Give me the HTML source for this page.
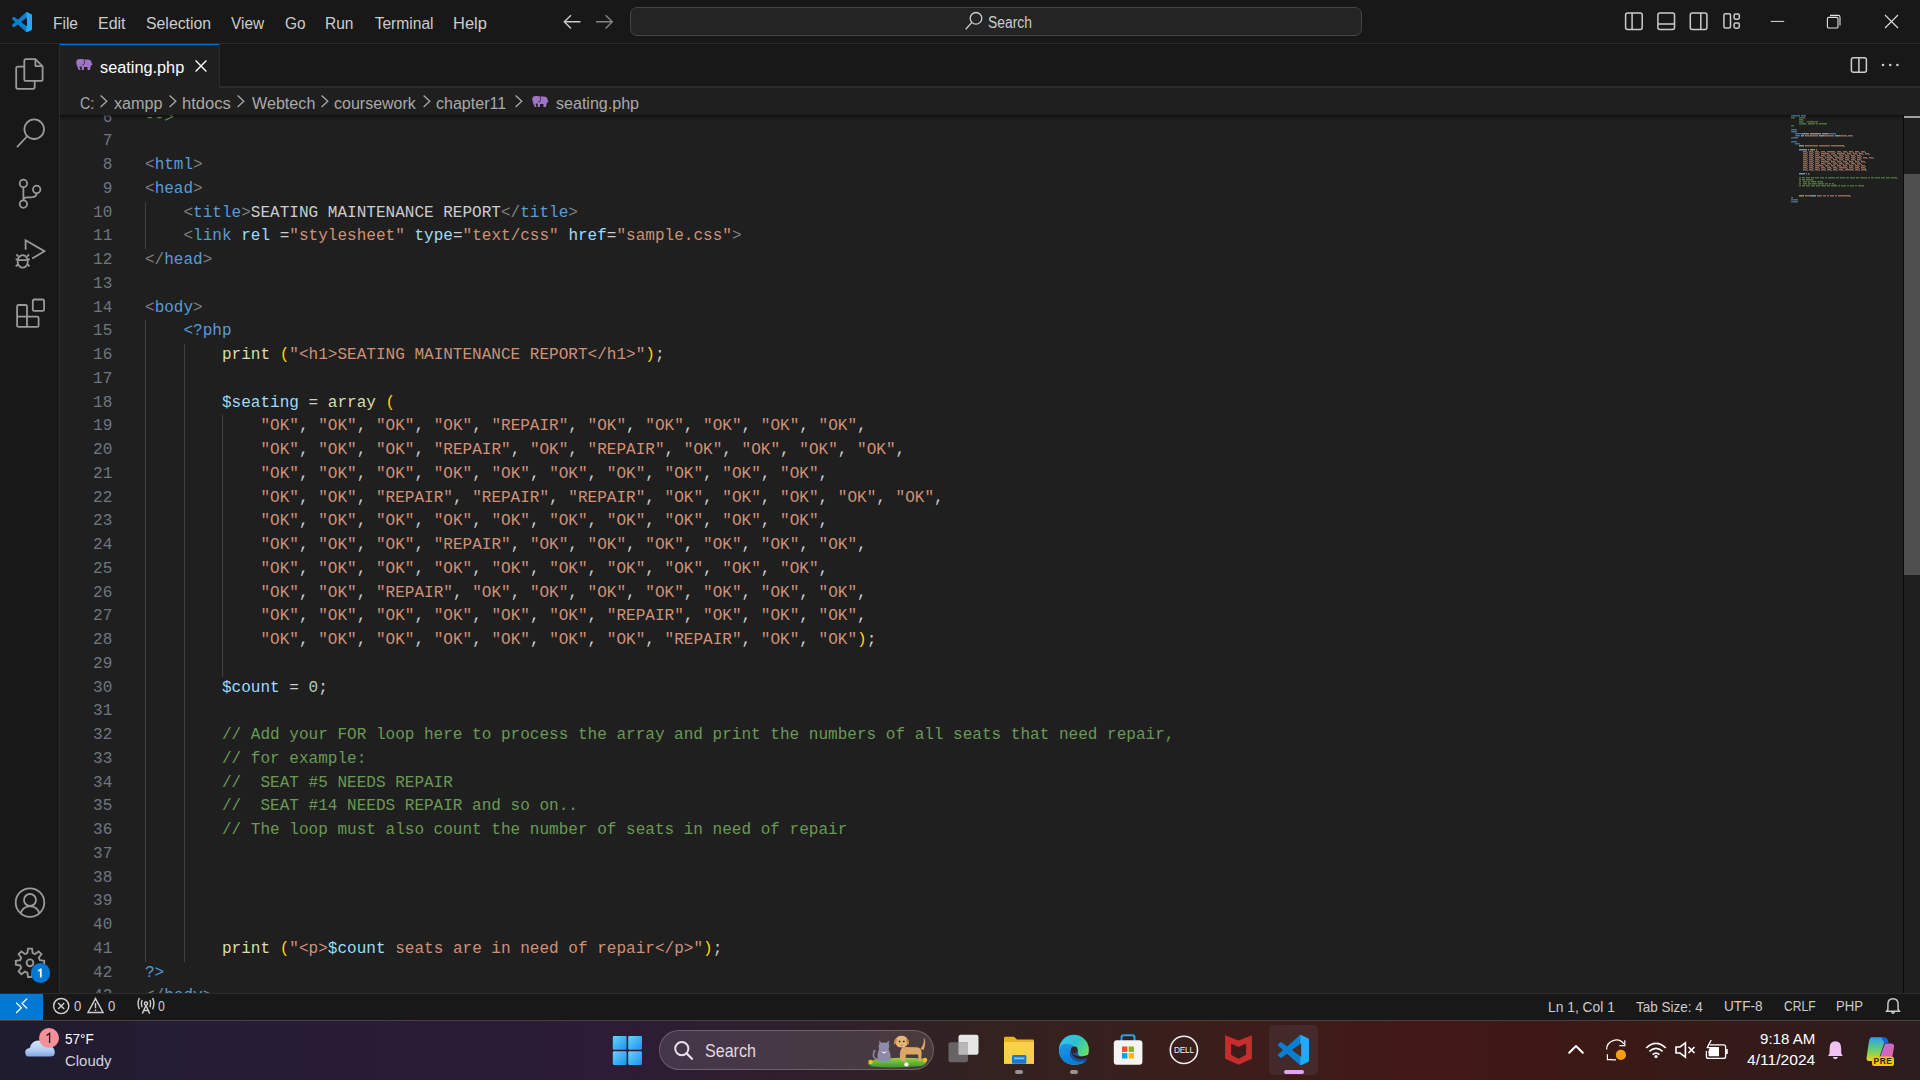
<!DOCTYPE html><html><head><meta charset="utf-8"><style>
*{margin:0;padding:0;box-sizing:border-box}
html,body{width:1920px;height:1080px;overflow:hidden;background:#1f1f1f}
body>div,body>svg{position:absolute}
.ls{font-family:"Liberation Sans",sans-serif;line-height:1;white-space:pre;transform-origin:0 0}
.lm{font-family:"Liberation Mono",monospace;white-space:pre}
.code{position:absolute;left:0;top:0;width:1920px;height:1080px;overflow:hidden}
.ln{position:absolute;font-family:"Liberation Mono",monospace;font-size:16.04px;line-height:23.75px;height:23.75px;white-space:pre}
</style></head><body>
<div style="left:0px;top:0px;width:1920px;height:43px;background:#181818;"></div>
<div style="left:0px;top:43px;width:1920px;height:1px;background:#2b2b2b;"></div>
<svg style="position:absolute;left:11.9px;top:11.9px" width="20" height="20.1" viewBox="0 0 100 100" preserveAspectRatio="none"><defs><clipPath id="vca"><path d="M96.46 10.8L75.86.87a6.23 6.23 0 0 0-7.1 1.2L29.35 38.04 12.19 25.01a4.16 4.16 0 0 0-5.32.24L1.36 30.26a4.17 4.17 0 0 0 0 6.16L16.25 50 1.36 63.58a4.17 4.17 0 0 0 0 6.16l5.51 5.01a4.16 4.16 0 0 0 5.32.24l17.16-13.03 39.41 35.96a6.23 6.23 0 0 0 7.1 1.2l20.6-9.92A6.25 6.25 0 0 0 100 83.6V16.4a6.25 6.25 0 0 0-3.54-5.6zM75.01 72.7L45.1 50l29.91-22.7v45.4z"/></clipPath></defs><path d="M96.46 10.8L75.86.87a6.23 6.23 0 0 0-7.1 1.2L29.35 38.04 12.19 25.01a4.16 4.16 0 0 0-5.32.24L1.36 30.26a4.17 4.17 0 0 0 0 6.16L16.25 50 1.36 63.58a4.17 4.17 0 0 0 0 6.16l5.51 5.01a4.16 4.16 0 0 0 5.32.24l17.16-13.03 39.41 35.96a6.23 6.23 0 0 0 7.1 1.2l20.6-9.92A6.25 6.25 0 0 0 100 83.6V16.4a6.25 6.25 0 0 0-3.54-5.6zM75.01 72.7L45.1 50l29.91-22.7v45.4z" fill="#0a7fd0"/><rect x="72" y="0" width="30" height="100" fill="#25a9f2" clip-path="url(#vca)"/></svg>
<div class="ls" style="left:52.95px;top:16.15px;font-size:15.6px;color:#cccccc;transform:scaleX(0.9939);">File</div>
<div class="ls" style="left:97.83px;top:16.15px;font-size:15.6px;color:#cccccc;transform:scaleX(1.0251);">Edit</div>
<div class="ls" style="left:145.63px;top:16.15px;font-size:15.6px;color:#cccccc;transform:scaleX(1.0153);">Selection</div>
<div class="ls" style="left:231.09px;top:16.15px;font-size:15.6px;color:#cccccc;transform:scaleX(0.9870);">View</div>
<div class="ls" style="left:285.09px;top:16.15px;font-size:15.6px;color:#cccccc;transform:scaleX(0.9856);">Go</div>
<div class="ls" style="left:324.95px;top:16.15px;font-size:15.6px;color:#cccccc;transform:scaleX(0.9946);">Run</div>
<div class="ls" style="left:374.63px;top:16.15px;font-size:15.6px;color:#cccccc;">Terminal</div>
<div class="ls" style="left:453.33px;top:16.15px;font-size:15.6px;color:#cccccc;transform:scaleX(1.0571);">Help</div>
<svg style="position:absolute;left:560px;top:11px;" width="24" height="22" viewBox="0 0 24 22"><path d="M4.5 10.8 H20.5 M11 4.2 L4.3 10.8 L11 17.4" stroke="#cccccc" stroke-width="1.4" fill="none"/></svg>
<svg style="position:absolute;left:594px;top:11px;" width="24" height="22" viewBox="0 0 24 22"><path d="M2 10.8 H18 M11.6 4.2 L18.3 10.8 L11.6 17.4" stroke="#868686" stroke-width="1.4" fill="none"/></svg>
<div style="left:630px;top:7px;width:732px;height:29px;background:#242424;border:1px solid #454545;border-radius:7px"></div>
<svg style="position:absolute;left:963px;top:10px;" width="22" height="22" viewBox="0 0 22 22"><circle cx="13" cy="8.3" r="5.8" stroke="#cccccc" stroke-width="1.3" fill="none"/><path d="M8.9 12.4 L2.8 19.2" stroke="#cccccc" stroke-width="1.4"/></svg>
<div class="ls" style="left:987.71px;top:15.15px;font-size:15.6px;color:#cccccc;transform:scaleX(0.8879);">Search</div>
<svg style="position:absolute;left:1620px;top:8px;" width="28" height="28" viewBox="0 0 28 28"><rect x="5.6" y="4.9" width="16.6" height="16.6" rx="2" stroke="#cccccc" stroke-width="1.5" fill="none"/><path d="M12.1 5 V21.5" stroke="#cccccc" stroke-width="1.5" fill="none"/></svg>
<svg style="position:absolute;left:1652px;top:8px;" width="28" height="28" viewBox="0 0 28 28"><rect x="5.9" y="4.9" width="16.6" height="16.6" rx="2" stroke="#cccccc" stroke-width="1.5" fill="none"/><path d="M6 16 H22.5" stroke="#cccccc" stroke-width="1.5" fill="none"/></svg>
<svg style="position:absolute;left:1684px;top:8px;" width="28" height="28" viewBox="0 0 28 28"><rect x="6.3" y="4.9" width="16.6" height="16.6" rx="2" stroke="#cccccc" stroke-width="1.5" fill="none"/><path d="M16.8 5 V21.5" stroke="#cccccc" stroke-width="1.5" fill="none"/></svg>
<svg style="position:absolute;left:1716px;top:8px;" width="28" height="28" viewBox="0 0 28 28"><rect x="7.9" y="5.7" width="6.6" height="14.4" rx="1.6" stroke="#cccccc" stroke-width="1.5" fill="none"/><rect x="18.1" y="6" width="5.2" height="5.2" rx="1.4" stroke="#cccccc" stroke-width="1.5" fill="none"/><rect x="18.1" y="15" width="5.2" height="5.2" rx="1.4" stroke="#cccccc" stroke-width="1.5" fill="none"/></svg>
<svg style="position:absolute;left:1768px;top:18px;" width="20" height="8" viewBox="0 0 20 8"><path d="M2.8 3.4 H16.2" stroke="#e0e0e0" stroke-width="1"/></svg>
<svg style="position:absolute;left:1824px;top:12px;" width="20" height="20" viewBox="0 0 20 20"><rect x="3.4" y="5.4" width="10.6" height="10.6" rx="1.3" stroke="#e0e0e0" stroke-width="1.1" fill="none"/><path d="M6 3.4 H14.2 Q16 3.4 16 5.2 V13.4" stroke="#e0e0e0" stroke-width="1.1" fill="none"/></svg>
<svg style="position:absolute;left:1882px;top:12px;" width="20" height="20" viewBox="0 0 20 20"><path d="M3 3 L16 16 M16 3 L3 16" stroke="#e0e0e0" stroke-width="1.1"/></svg>
<div style="left:0px;top:44px;width:59px;height:949px;background:#181818;"></div>
<div style="left:59px;top:44px;width:1px;height:949px;background:#2b2b2b;"></div>
<svg style="position:absolute;left:0px;top:0px;" width="60" height="100" viewBox="0 0 60 100"><path d="M26 59.2 H35.4 L42.6 66.4 V79.2 Q42.6 80.9 40.9 80.9 H26 Q24.3 80.9 24.3 79.2 V60.9 Q24.3 59.2 26 59.2 Z" stroke="#9a9a9a" stroke-width="1.8" fill="none"/><path d="M35.4 59.4 V65.6 Q35.4 66.2 36 66.2 H42.4" stroke="#9a9a9a" stroke-width="1.8" fill="none"/><path d="M24.3 66.6 H17.9 Q16.2 66.6 16.2 68.3 V87.1 Q16.2 88.8 17.9 88.8 H33 Q34.7 88.8 34.7 87.1 V80.9" stroke="#9a9a9a" stroke-width="1.8" fill="none"/></svg>
<svg style="position:absolute;left:14px;top:117px;" width="32" height="32" viewBox="0 0 32 32"><circle cx="20.2" cy="12.2" r="9.8" stroke="#9a9a9a" stroke-width="1.8" fill="none"/><path d="M13.4 19 L3 30.2" stroke="#9a9a9a" stroke-width="1.8" fill="none"/></svg>
<svg style="position:absolute;left:14px;top:177px;" width="32" height="32" viewBox="0 0 32 32"><circle cx="9.4" cy="6.4" r="3.7" stroke="#9a9a9a" stroke-width="1.8" fill="none"/><circle cx="9.4" cy="27.1" r="3.7" stroke="#9a9a9a" stroke-width="1.8" fill="none"/><circle cx="22.7" cy="12.4" r="3.7" stroke="#9a9a9a" stroke-width="1.8" fill="none"/><path d="M9.4 10.1 V23.4 M22.7 16.1 Q22.7 20.4 17 20.4 H13 Q9.4 20.4 9.4 23.4" stroke="#9a9a9a" stroke-width="1.8" fill="none"/></svg>
<svg style="position:absolute;left:14px;top:237px;" width="32" height="32" viewBox="0 0 32 32"><path d="M11.6 12.8 V3.2 L30.4 14.2 L18.2 21.6" stroke="#9a9a9a" stroke-width="1.8" fill="none"/><ellipse cx="8.7" cy="24.4" rx="5.1" ry="6.3" stroke="#9a9a9a" stroke-width="1.8" fill="none"/><path d="M3.6 22.4 H1.6 M13.8 22.4 H15.8 M3.8 27.4 L1.8 29.4 M13.6 27.4 L15.6 29.4 M4.4 19.6 L2.4 17.4 M13 19.6 L15 17.4 M3.8 23.2 H13.6" stroke="#9a9a9a" stroke-width="1.8" fill="none"/></svg>
<svg style="position:absolute;left:14px;top:297px;" width="32" height="32" viewBox="0 0 32 32"><path d="M3.1 9.4 Q3.1 8 4.5 8 H11.6 Q13 8 13 9.4 V19.7 H23.2 Q24.6 19.7 24.6 21.1 V28.4 Q24.6 29.8 23.2 29.8 H4.5 Q3.1 29.8 3.1 28.4 Z M3.1 19.7 H13 V29.8" stroke="#9a9a9a" stroke-width="1.8" fill="none"/><rect x="18.8" y="2.5" width="11.3" height="11.3" rx="1.4" stroke="#9a9a9a" stroke-width="1.8" fill="none"/></svg>
<svg style="position:absolute;left:14px;top:886px;" width="32" height="32" viewBox="0 0 32 32"><circle cx="16" cy="16.6" r="14.3" stroke="#9a9a9a" stroke-width="1.8" fill="none"/><circle cx="16" cy="14" r="6" stroke="#9a9a9a" stroke-width="1.8" fill="none"/><path d="M6.8 27 Q9 20.4 16 20.4 Q23 20.4 25.2 27" stroke="#9a9a9a" stroke-width="1.8" fill="none"/></svg>
<svg style="position:absolute;left:14px;top:946px;" width="32" height="32" viewBox="0 0 32 32"><path d="M12.17 7.56 L13.36 6.95 L14.01 2.64 L17.99 2.64 L18.64 6.95 L19.83 7.56 L19.83 7.56 L21.10 7.97 L24.61 5.38 L27.42 8.19 L24.83 11.70 L25.24 12.97 L25.24 12.97 L25.85 14.16 L30.16 14.81 L30.16 18.79 L25.85 19.44 L25.24 20.63 L25.24 20.63 L24.83 21.90 L27.42 25.41 L24.61 28.22 L21.10 25.63 L19.83 26.04 L19.83 26.04 L18.64 26.65 L17.99 30.96 L14.01 30.96 L13.36 26.65 L12.17 26.04 L12.17 26.04 L10.90 25.63 L7.39 28.22 L4.58 25.41 L7.17 21.90 L6.76 20.63 L6.76 20.63 L6.15 19.44 L1.84 18.79 L1.84 14.81 L6.15 14.16 L6.76 12.97 L6.76 12.97 L7.17 11.70 L4.58 8.19 L7.39 5.38 L10.90 7.97 L12.17 7.56 Z" stroke="#969696" stroke-width="1.9" fill="none" stroke-linejoin="miter"/><circle cx="16" cy="16.8" r="3.4" stroke="#969696" stroke-width="1.9" fill="none"/></svg>
<div style="left:30.5px;top:963px;width:19.5px;height:19.5px;border-radius:50%;background:#0078d4"></div>
<svg style="position:absolute;left:30px;top:963px;" width="20" height="20" viewBox="0 0 20 20"><path d="M8.3 7.9 L10.8 6.3 V14.4" stroke="#ffffff" stroke-width="1.8" fill="none" stroke-linejoin="round"/></svg>
<div style="left:60px;top:44px;width:1860px;height:43px;background:#181818;"></div>
<div style="left:60px;top:86px;width:1860px;height:1.5px;background:#2b2b2b;"></div>
<div style="left:60px;top:44px;width:159px;height:44px;background:#1f1f1f;"></div>
<div style="left:60px;top:44px;width:159px;height:1px;background:#0078d4;"></div>
<div style="left:219px;top:44px;width:1px;height:43px;background:#2b2b2b;"></div>
<svg style="position:absolute;left:72px;top:54px;" width="26" height="22" viewBox="0 0 26 22"><path fill="#a074c4" d="M6 5.2 C4.8 5.5 4.2 6.8 4.3 8.6 C4.4 10.8 5.2 12.6 6.2 14.6 L6.8 16 L8.6 16 L7.6 13.6 C7.6 12.8 8.6 12.4 9.6 12.6 L9.8 16.1 L11.9 16.1 L12 13 L15.4 13 L15.6 16.1 L18 16.1 L18.6 12.4 C19.4 11.6 19.8 11 20.8 10.6 C19.8 10.4 19.8 9.4 19.6 8.2 C19.2 6.4 17.8 5.6 16 5.6 L12.6 5.6 C11.6 5 9.5 4.8 8 4.9 Z"/><path d="M12.4 6 V10 Q12.3 10.8 10.2 10.8" stroke="#1f1f1f" stroke-width="0.7" fill="none"/></svg>
<div class="ls" style="left:99.64px;top:59.56px;font-size:16px;color:#ffffff;transform:scaleX(1.0176);">seating.php</div>
<svg style="position:absolute;left:193px;top:58px;" width="16" height="16" viewBox="0 0 16 16"><path d="M2.6 2.6 L13.4 13.4 M13.4 2.6 L2.6 13.4" stroke="#ffffff" stroke-width="1.35"/></svg>
<svg style="position:absolute;left:1848px;top:54px;" width="22" height="22" viewBox="0 0 22 22"><rect x="3.4" y="3.8" width="15" height="14.4" rx="2" stroke="#cccccc" stroke-width="1.5" fill="none"/><path d="M10.9 4 V18" stroke="#cccccc" stroke-width="1.5"/></svg>
<svg style="position:absolute;left:1878px;top:58px;" width="26" height="14" viewBox="0 0 26 14"><circle cx="5" cy="7" r="1.3" fill="#cccccc"/><circle cx="12.2" cy="7" r="1.3" fill="#cccccc"/><circle cx="19.4" cy="7" r="1.3" fill="#cccccc"/></svg>
<div style="left:60px;top:87.5px;width:1860px;height:27.5px;background:#1f1f1f;"></div>
<div class="ls" style="left:79.71px;top:95.69px;font-size:15.6px;color:#a9a9a9;transform:scaleX(0.9154);">C:</div>
<div class="ls" style="left:113.71px;top:95.87px;font-size:15.6px;color:#a9a9a9;transform:scaleX(1.0375);">xampp</div>
<div class="ls" style="left:181.87px;top:95.69px;font-size:15.6px;color:#a9a9a9;transform:scaleX(1.0636);">htdocs</div>
<div class="ls" style="left:251.55px;top:95.69px;font-size:15.6px;color:#a9a9a9;transform:scaleX(1.0342);">Webtech</div>
<div class="ls" style="left:334.17px;top:95.69px;font-size:15.6px;color:#a9a9a9;transform:scaleX(1.0261);">coursework</div>
<div class="ls" style="left:436.17px;top:95.69px;font-size:15.6px;color:#a9a9a9;transform:scaleX(1.0283);">chapter11</div>
<svg style="position:absolute;left:98.3px;top:93px;" width="12" height="16" viewBox="0 0 12 16"><path d="M2.6 2.6 L8.8 8.3 L2.6 14" stroke="#a9a9a9" stroke-width="1.3" fill="none"/></svg>
<svg style="position:absolute;left:167.2px;top:93px;" width="12" height="16" viewBox="0 0 12 16"><path d="M2.6 2.6 L8.8 8.3 L2.6 14" stroke="#a9a9a9" stroke-width="1.3" fill="none"/></svg>
<svg style="position:absolute;left:235.4px;top:93px;" width="12" height="16" viewBox="0 0 12 16"><path d="M2.6 2.6 L8.8 8.3 L2.6 14" stroke="#a9a9a9" stroke-width="1.3" fill="none"/></svg>
<svg style="position:absolute;left:318.5px;top:93px;" width="12" height="16" viewBox="0 0 12 16"><path d="M2.6 2.6 L8.8 8.3 L2.6 14" stroke="#a9a9a9" stroke-width="1.3" fill="none"/></svg>
<svg style="position:absolute;left:421px;top:93px;" width="12" height="16" viewBox="0 0 12 16"><path d="M2.6 2.6 L8.8 8.3 L2.6 14" stroke="#a9a9a9" stroke-width="1.3" fill="none"/></svg>
<svg style="position:absolute;left:513px;top:93px;" width="12" height="16" viewBox="0 0 12 16"><path d="M2.6 2.6 L8.8 8.3 L2.6 14" stroke="#a9a9a9" stroke-width="1.3" fill="none"/></svg>
<svg style="position:absolute;left:527.7px;top:91.4px;" width="26" height="22" viewBox="0 0 26 22"><path fill="#a074c4" d="M6 5.2 C4.8 5.5 4.2 6.8 4.3 8.6 C4.4 10.8 5.2 12.6 6.2 14.6 L6.8 16 L8.6 16 L7.6 13.6 C7.6 12.8 8.6 12.4 9.6 12.6 L9.8 16.1 L11.9 16.1 L12 13 L15.4 13 L15.6 16.1 L18 16.1 L18.6 12.4 C19.4 11.6 19.8 11 20.8 10.6 C19.8 10.4 19.8 9.4 19.6 8.2 C19.2 6.4 17.8 5.6 16 5.6 L12.6 5.6 C11.6 5 9.5 4.8 8 4.9 Z"/><path d="M12.4 6 V10 Q12.3 10.8 10.2 10.8" stroke="#1f1f1f" stroke-width="0.7" fill="none"/></svg>
<div class="ls" style="left:556.05px;top:95.69px;font-size:15.6px;color:#a9a9a9;transform:scaleX(1.0300);">seating.php</div>
<div style="left:60px;top:115px;width:1860px;height:878px;background:#1f1f1f;"></div>
<div class="code" style="left:60px;top:115px;width:1730px;height:878px;">
<div class="ln" style="left:42.675px;top:-8.300px;color:#6e7681">6</div>
<div class="ln" style="left:85.0px;top:-8.300px"><span style="color:#6A9955">--&gt;</span></div>
<div class="ln" style="left:42.675px;top:15.450px;color:#6e7681">7</div>
<div class="ln" style="left:42.675px;top:39.200px;color:#6e7681">8</div>
<div class="ln" style="left:85.0px;top:39.200px"><span style="color:#808080">&lt;</span><span style="color:#569CD6">html</span><span style="color:#808080">&gt;</span></div>
<div class="ln" style="left:42.675px;top:62.950px;color:#6e7681">9</div>
<div class="ln" style="left:85.0px;top:62.950px"><span style="color:#808080">&lt;</span><span style="color:#569CD6">head</span><span style="color:#808080">&gt;</span></div>
<div class="ln" style="left:33.050px;top:86.700px;color:#6e7681">10</div>
<div class="ln" style="left:85.0px;top:86.700px"><span style="color:#CCCCCC">    </span><span style="color:#808080">&lt;</span><span style="color:#569CD6">title</span><span style="color:#808080">&gt;</span><span style="color:#CCCCCC">SEATING MAINTENANCE REPORT</span><span style="color:#808080">&lt;/</span><span style="color:#569CD6">title</span><span style="color:#808080">&gt;</span></div>
<div class="ln" style="left:33.050px;top:110.450px;color:#6e7681">11</div>
<div class="ln" style="left:85.0px;top:110.450px"><span style="color:#CCCCCC">    </span><span style="color:#808080">&lt;</span><span style="color:#569CD6">link</span><span style="color:#CCCCCC"> </span><span style="color:#9CDCFE">rel</span><span style="color:#CCCCCC"> =</span><span style="color:#CE9178">&quot;stylesheet&quot;</span><span style="color:#CCCCCC"> </span><span style="color:#9CDCFE">type</span><span style="color:#CCCCCC">=</span><span style="color:#CE9178">&quot;text/css&quot;</span><span style="color:#CCCCCC"> </span><span style="color:#9CDCFE">href</span><span style="color:#CCCCCC">=</span><span style="color:#CE9178">&quot;sample.css&quot;</span><span style="color:#808080">&gt;</span></div>
<div class="ln" style="left:33.050px;top:134.200px;color:#6e7681">12</div>
<div class="ln" style="left:85.0px;top:134.200px"><span style="color:#808080">&lt;/</span><span style="color:#569CD6">head</span><span style="color:#808080">&gt;</span></div>
<div class="ln" style="left:33.050px;top:157.950px;color:#6e7681">13</div>
<div class="ln" style="left:33.050px;top:181.700px;color:#6e7681">14</div>
<div class="ln" style="left:85.0px;top:181.700px"><span style="color:#808080">&lt;</span><span style="color:#569CD6">body</span><span style="color:#808080">&gt;</span></div>
<div class="ln" style="left:33.050px;top:205.450px;color:#6e7681">15</div>
<div class="ln" style="left:85.0px;top:205.450px"><span style="color:#CCCCCC">    </span><span style="color:#569CD6">&lt;?php</span></div>
<div class="ln" style="left:33.050px;top:229.200px;color:#6e7681">16</div>
<div class="ln" style="left:85.0px;top:229.200px"><span style="color:#CCCCCC">        </span><span style="color:#DCDCAA">print</span><span style="color:#CCCCCC"> </span><span style="color:#FFD700">(</span><span style="color:#CE9178">&quot;&lt;h1&gt;SEATING MAINTENANCE REPORT&lt;/h1&gt;&quot;</span><span style="color:#FFD700">)</span><span style="color:#CCCCCC">;</span></div>
<div class="ln" style="left:33.050px;top:252.950px;color:#6e7681">17</div>
<div class="ln" style="left:33.050px;top:276.700px;color:#6e7681">18</div>
<div class="ln" style="left:85.0px;top:276.700px"><span style="color:#CCCCCC">        </span><span style="color:#9CDCFE">$seating</span><span style="color:#CCCCCC"> = </span><span style="color:#DCDCAA">array</span><span style="color:#CCCCCC"> </span><span style="color:#FFD700">(</span></div>
<div class="ln" style="left:33.050px;top:300.450px;color:#6e7681">19</div>
<div class="ln" style="left:85.0px;top:300.450px"><span style="color:#CCCCCC">            </span><span style="color:#CE9178">&quot;OK&quot;</span><span style="color:#CCCCCC">, </span><span style="color:#CE9178">&quot;OK&quot;</span><span style="color:#CCCCCC">, </span><span style="color:#CE9178">&quot;OK&quot;</span><span style="color:#CCCCCC">, </span><span style="color:#CE9178">&quot;OK&quot;</span><span style="color:#CCCCCC">, </span><span style="color:#CE9178">&quot;REPAIR&quot;</span><span style="color:#CCCCCC">, </span><span style="color:#CE9178">&quot;OK&quot;</span><span style="color:#CCCCCC">, </span><span style="color:#CE9178">&quot;OK&quot;</span><span style="color:#CCCCCC">, </span><span style="color:#CE9178">&quot;OK&quot;</span><span style="color:#CCCCCC">, </span><span style="color:#CE9178">&quot;OK&quot;</span><span style="color:#CCCCCC">, </span><span style="color:#CE9178">&quot;OK&quot;</span><span style="color:#CCCCCC">,</span></div>
<div class="ln" style="left:33.050px;top:324.200px;color:#6e7681">20</div>
<div class="ln" style="left:85.0px;top:324.200px"><span style="color:#CCCCCC">            </span><span style="color:#CE9178">&quot;OK&quot;</span><span style="color:#CCCCCC">, </span><span style="color:#CE9178">&quot;OK&quot;</span><span style="color:#CCCCCC">, </span><span style="color:#CE9178">&quot;OK&quot;</span><span style="color:#CCCCCC">, </span><span style="color:#CE9178">&quot;REPAIR&quot;</span><span style="color:#CCCCCC">, </span><span style="color:#CE9178">&quot;OK&quot;</span><span style="color:#CCCCCC">, </span><span style="color:#CE9178">&quot;REPAIR&quot;</span><span style="color:#CCCCCC">, </span><span style="color:#CE9178">&quot;OK&quot;</span><span style="color:#CCCCCC">, </span><span style="color:#CE9178">&quot;OK&quot;</span><span style="color:#CCCCCC">, </span><span style="color:#CE9178">&quot;OK&quot;</span><span style="color:#CCCCCC">, </span><span style="color:#CE9178">&quot;OK&quot;</span><span style="color:#CCCCCC">,</span></div>
<div class="ln" style="left:33.050px;top:347.950px;color:#6e7681">21</div>
<div class="ln" style="left:85.0px;top:347.950px"><span style="color:#CCCCCC">            </span><span style="color:#CE9178">&quot;OK&quot;</span><span style="color:#CCCCCC">, </span><span style="color:#CE9178">&quot;OK&quot;</span><span style="color:#CCCCCC">, </span><span style="color:#CE9178">&quot;OK&quot;</span><span style="color:#CCCCCC">, </span><span style="color:#CE9178">&quot;OK&quot;</span><span style="color:#CCCCCC">, </span><span style="color:#CE9178">&quot;OK&quot;</span><span style="color:#CCCCCC">, </span><span style="color:#CE9178">&quot;OK&quot;</span><span style="color:#CCCCCC">, </span><span style="color:#CE9178">&quot;OK&quot;</span><span style="color:#CCCCCC">, </span><span style="color:#CE9178">&quot;OK&quot;</span><span style="color:#CCCCCC">, </span><span style="color:#CE9178">&quot;OK&quot;</span><span style="color:#CCCCCC">, </span><span style="color:#CE9178">&quot;OK&quot;</span><span style="color:#CCCCCC">,</span></div>
<div class="ln" style="left:33.050px;top:371.700px;color:#6e7681">22</div>
<div class="ln" style="left:85.0px;top:371.700px"><span style="color:#CCCCCC">            </span><span style="color:#CE9178">&quot;OK&quot;</span><span style="color:#CCCCCC">, </span><span style="color:#CE9178">&quot;OK&quot;</span><span style="color:#CCCCCC">, </span><span style="color:#CE9178">&quot;REPAIR&quot;</span><span style="color:#CCCCCC">, </span><span style="color:#CE9178">&quot;REPAIR&quot;</span><span style="color:#CCCCCC">, </span><span style="color:#CE9178">&quot;REPAIR&quot;</span><span style="color:#CCCCCC">, </span><span style="color:#CE9178">&quot;OK&quot;</span><span style="color:#CCCCCC">, </span><span style="color:#CE9178">&quot;OK&quot;</span><span style="color:#CCCCCC">, </span><span style="color:#CE9178">&quot;OK&quot;</span><span style="color:#CCCCCC">, </span><span style="color:#CE9178">&quot;OK&quot;</span><span style="color:#CCCCCC">, </span><span style="color:#CE9178">&quot;OK&quot;</span><span style="color:#CCCCCC">,</span></div>
<div class="ln" style="left:33.050px;top:395.450px;color:#6e7681">23</div>
<div class="ln" style="left:85.0px;top:395.450px"><span style="color:#CCCCCC">            </span><span style="color:#CE9178">&quot;OK&quot;</span><span style="color:#CCCCCC">, </span><span style="color:#CE9178">&quot;OK&quot;</span><span style="color:#CCCCCC">, </span><span style="color:#CE9178">&quot;OK&quot;</span><span style="color:#CCCCCC">, </span><span style="color:#CE9178">&quot;OK&quot;</span><span style="color:#CCCCCC">, </span><span style="color:#CE9178">&quot;OK&quot;</span><span style="color:#CCCCCC">, </span><span style="color:#CE9178">&quot;OK&quot;</span><span style="color:#CCCCCC">, </span><span style="color:#CE9178">&quot;OK&quot;</span><span style="color:#CCCCCC">, </span><span style="color:#CE9178">&quot;OK&quot;</span><span style="color:#CCCCCC">, </span><span style="color:#CE9178">&quot;OK&quot;</span><span style="color:#CCCCCC">, </span><span style="color:#CE9178">&quot;OK&quot;</span><span style="color:#CCCCCC">,</span></div>
<div class="ln" style="left:33.050px;top:419.200px;color:#6e7681">24</div>
<div class="ln" style="left:85.0px;top:419.200px"><span style="color:#CCCCCC">            </span><span style="color:#CE9178">&quot;OK&quot;</span><span style="color:#CCCCCC">, </span><span style="color:#CE9178">&quot;OK&quot;</span><span style="color:#CCCCCC">, </span><span style="color:#CE9178">&quot;OK&quot;</span><span style="color:#CCCCCC">, </span><span style="color:#CE9178">&quot;REPAIR&quot;</span><span style="color:#CCCCCC">, </span><span style="color:#CE9178">&quot;OK&quot;</span><span style="color:#CCCCCC">, </span><span style="color:#CE9178">&quot;OK&quot;</span><span style="color:#CCCCCC">, </span><span style="color:#CE9178">&quot;OK&quot;</span><span style="color:#CCCCCC">, </span><span style="color:#CE9178">&quot;OK&quot;</span><span style="color:#CCCCCC">, </span><span style="color:#CE9178">&quot;OK&quot;</span><span style="color:#CCCCCC">, </span><span style="color:#CE9178">&quot;OK&quot;</span><span style="color:#CCCCCC">,</span></div>
<div class="ln" style="left:33.050px;top:442.950px;color:#6e7681">25</div>
<div class="ln" style="left:85.0px;top:442.950px"><span style="color:#CCCCCC">            </span><span style="color:#CE9178">&quot;OK&quot;</span><span style="color:#CCCCCC">, </span><span style="color:#CE9178">&quot;OK&quot;</span><span style="color:#CCCCCC">, </span><span style="color:#CE9178">&quot;OK&quot;</span><span style="color:#CCCCCC">, </span><span style="color:#CE9178">&quot;OK&quot;</span><span style="color:#CCCCCC">, </span><span style="color:#CE9178">&quot;OK&quot;</span><span style="color:#CCCCCC">, </span><span style="color:#CE9178">&quot;OK&quot;</span><span style="color:#CCCCCC">, </span><span style="color:#CE9178">&quot;OK&quot;</span><span style="color:#CCCCCC">, </span><span style="color:#CE9178">&quot;OK&quot;</span><span style="color:#CCCCCC">, </span><span style="color:#CE9178">&quot;OK&quot;</span><span style="color:#CCCCCC">, </span><span style="color:#CE9178">&quot;OK&quot;</span><span style="color:#CCCCCC">,</span></div>
<div class="ln" style="left:33.050px;top:466.700px;color:#6e7681">26</div>
<div class="ln" style="left:85.0px;top:466.700px"><span style="color:#CCCCCC">            </span><span style="color:#CE9178">&quot;OK&quot;</span><span style="color:#CCCCCC">, </span><span style="color:#CE9178">&quot;OK&quot;</span><span style="color:#CCCCCC">, </span><span style="color:#CE9178">&quot;REPAIR&quot;</span><span style="color:#CCCCCC">, </span><span style="color:#CE9178">&quot;OK&quot;</span><span style="color:#CCCCCC">, </span><span style="color:#CE9178">&quot;OK&quot;</span><span style="color:#CCCCCC">, </span><span style="color:#CE9178">&quot;OK&quot;</span><span style="color:#CCCCCC">, </span><span style="color:#CE9178">&quot;OK&quot;</span><span style="color:#CCCCCC">, </span><span style="color:#CE9178">&quot;OK&quot;</span><span style="color:#CCCCCC">, </span><span style="color:#CE9178">&quot;OK&quot;</span><span style="color:#CCCCCC">, </span><span style="color:#CE9178">&quot;OK&quot;</span><span style="color:#CCCCCC">,</span></div>
<div class="ln" style="left:33.050px;top:490.450px;color:#6e7681">27</div>
<div class="ln" style="left:85.0px;top:490.450px"><span style="color:#CCCCCC">            </span><span style="color:#CE9178">&quot;OK&quot;</span><span style="color:#CCCCCC">, </span><span style="color:#CE9178">&quot;OK&quot;</span><span style="color:#CCCCCC">, </span><span style="color:#CE9178">&quot;OK&quot;</span><span style="color:#CCCCCC">, </span><span style="color:#CE9178">&quot;OK&quot;</span><span style="color:#CCCCCC">, </span><span style="color:#CE9178">&quot;OK&quot;</span><span style="color:#CCCCCC">, </span><span style="color:#CE9178">&quot;OK&quot;</span><span style="color:#CCCCCC">, </span><span style="color:#CE9178">&quot;REPAIR&quot;</span><span style="color:#CCCCCC">, </span><span style="color:#CE9178">&quot;OK&quot;</span><span style="color:#CCCCCC">, </span><span style="color:#CE9178">&quot;OK&quot;</span><span style="color:#CCCCCC">, </span><span style="color:#CE9178">&quot;OK&quot;</span><span style="color:#CCCCCC">,</span></div>
<div class="ln" style="left:33.050px;top:514.200px;color:#6e7681">28</div>
<div class="ln" style="left:85.0px;top:514.200px"><span style="color:#CCCCCC">            </span><span style="color:#CE9178">&quot;OK&quot;</span><span style="color:#CCCCCC">, </span><span style="color:#CE9178">&quot;OK&quot;</span><span style="color:#CCCCCC">, </span><span style="color:#CE9178">&quot;OK&quot;</span><span style="color:#CCCCCC">, </span><span style="color:#CE9178">&quot;OK&quot;</span><span style="color:#CCCCCC">, </span><span style="color:#CE9178">&quot;OK&quot;</span><span style="color:#CCCCCC">, </span><span style="color:#CE9178">&quot;OK&quot;</span><span style="color:#CCCCCC">, </span><span style="color:#CE9178">&quot;OK&quot;</span><span style="color:#CCCCCC">, </span><span style="color:#CE9178">&quot;REPAIR&quot;</span><span style="color:#CCCCCC">, </span><span style="color:#CE9178">&quot;OK&quot;</span><span style="color:#CCCCCC">, </span><span style="color:#CE9178">&quot;OK&quot;</span><span style="color:#FFD700">)</span><span style="color:#CCCCCC">;</span></div>
<div class="ln" style="left:33.050px;top:537.950px;color:#6e7681">29</div>
<div class="ln" style="left:33.050px;top:561.700px;color:#6e7681">30</div>
<div class="ln" style="left:85.0px;top:561.700px"><span style="color:#CCCCCC">        </span><span style="color:#9CDCFE">$count</span><span style="color:#CCCCCC"> = </span><span style="color:#B5CEA8">0</span><span style="color:#CCCCCC">;</span></div>
<div class="ln" style="left:33.050px;top:585.450px;color:#6e7681">31</div>
<div class="ln" style="left:33.050px;top:609.200px;color:#6e7681">32</div>
<div class="ln" style="left:85.0px;top:609.200px"><span style="color:#CCCCCC">        </span><span style="color:#6A9955">// Add your FOR loop here to process the array and print the numbers of all seats that need repair,</span></div>
<div class="ln" style="left:33.050px;top:632.950px;color:#6e7681">33</div>
<div class="ln" style="left:85.0px;top:632.950px"><span style="color:#CCCCCC">        </span><span style="color:#6A9955">// for example:</span></div>
<div class="ln" style="left:33.050px;top:656.700px;color:#6e7681">34</div>
<div class="ln" style="left:85.0px;top:656.700px"><span style="color:#CCCCCC">        </span><span style="color:#6A9955">//  SEAT #5 NEEDS REPAIR</span></div>
<div class="ln" style="left:33.050px;top:680.450px;color:#6e7681">35</div>
<div class="ln" style="left:85.0px;top:680.450px"><span style="color:#CCCCCC">        </span><span style="color:#6A9955">//  SEAT #14 NEEDS REPAIR and so on..</span></div>
<div class="ln" style="left:33.050px;top:704.200px;color:#6e7681">36</div>
<div class="ln" style="left:85.0px;top:704.200px"><span style="color:#CCCCCC">        </span><span style="color:#6A9955">// The loop must also count the number of seats in need of repair</span></div>
<div class="ln" style="left:33.050px;top:727.950px;color:#6e7681">37</div>
<div class="ln" style="left:33.050px;top:751.700px;color:#6e7681">38</div>
<div class="ln" style="left:33.050px;top:775.450px;color:#6e7681">39</div>
<div class="ln" style="left:33.050px;top:799.200px;color:#6e7681">40</div>
<div class="ln" style="left:33.050px;top:822.950px;color:#6e7681">41</div>
<div class="ln" style="left:85.0px;top:822.950px"><span style="color:#CCCCCC">        </span><span style="color:#DCDCAA">print</span><span style="color:#CCCCCC"> </span><span style="color:#FFD700">(</span><span style="color:#CE9178">&quot;&lt;p&gt;</span><span style="color:#9CDCFE">$count</span><span style="color:#CE9178"> seats are in need of repair&lt;/p&gt;&quot;</span><span style="color:#FFD700">)</span><span style="color:#CCCCCC">;</span></div>
<div class="ln" style="left:33.050px;top:846.700px;color:#6e7681">42</div>
<div class="ln" style="left:85.0px;top:846.700px"><span style="color:#569CD6">?&gt;</span></div>
<div class="ln" style="left:33.050px;top:870.450px;color:#6e7681">43</div>
<div class="ln" style="left:85.0px;top:870.450px"><span style="color:#808080">&lt;/</span><span style="color:#569CD6">body</span><span style="color:#808080">&gt;</span></div>
<div style="position:absolute;left:85.00px;top:86.70px;width:1px;height:47.50px;background:#404040"></div>
<div style="position:absolute;left:85.00px;top:205.45px;width:1px;height:641.25px;background:#404040"></div>
<div style="position:absolute;left:123.50px;top:229.20px;width:1px;height:617.50px;background:#404040"></div>
<div style="position:absolute;left:162.00px;top:300.45px;width:1px;height:261.25px;background:#404040"></div>
</div>
<div style="left:60px;top:115px;width:1843px;height:6px;background:linear-gradient(#00000090,#00000030 40%,#00000000)"></div>
<svg style="position:absolute;left:1785px;top:110px;" width="120" height="100" viewBox="0 0 120 100"><rect x="6" y="5.0" width="2" height="1.5" fill="#808080" opacity="0.62"/><rect x="8" y="5.0" width="7" height="1.5" fill="#569CD6" opacity="0.62"/><rect x="16" y="5.0" width="4" height="1.5" fill="#569CD6" opacity="0.62"/><rect x="20" y="5.0" width="1" height="1.5" fill="#808080" opacity="0.62"/><rect x="6" y="7.0" width="4" height="1.5" fill="#6A9955" opacity="0.62"/><rect x="14" y="7.0" width="6" height="1.5" fill="#6A9955" opacity="0.62"/><rect x="20" y="8.1" width="1" height="0.9" fill="#6A9955" opacity="0.45"/><rect x="14" y="9.0" width="4" height="1.5" fill="#6A9955" opacity="0.62"/><rect x="18" y="10.1" width="1" height="0.9" fill="#6A9955" opacity="0.45"/><rect x="14" y="11.0" width="4" height="1.5" fill="#6A9955" opacity="0.62"/><rect x="18" y="12.1" width="1" height="0.9" fill="#6A9955" opacity="0.45"/><rect x="22" y="11.0" width="7" height="1.5" fill="#6A9955" opacity="0.62"/><rect x="29" y="12.1" width="1" height="0.9" fill="#6A9955" opacity="0.45"/><rect x="30" y="11.0" width="3" height="1.5" fill="#6A9955" opacity="0.62"/><rect x="14" y="13.0" width="7" height="1.5" fill="#6A9955" opacity="0.62"/><rect x="21" y="14.1" width="1" height="0.9" fill="#6A9955" opacity="0.45"/><rect x="23" y="13.0" width="7" height="1.5" fill="#6A9955" opacity="0.62"/><rect x="31" y="13.0" width="2" height="1.5" fill="#6A9955" opacity="0.62"/><rect x="34" y="13.0" width="8" height="1.5" fill="#6A9955" opacity="0.62"/><rect x="6" y="15.0" width="3" height="1.5" fill="#6A9955" opacity="0.62"/><rect x="6" y="19.0" width="1" height="1.5" fill="#808080" opacity="0.62"/><rect x="7" y="19.0" width="4" height="1.5" fill="#569CD6" opacity="0.62"/><rect x="11" y="19.0" width="1" height="1.5" fill="#808080" opacity="0.62"/><rect x="6" y="21.0" width="1" height="1.5" fill="#808080" opacity="0.62"/><rect x="7" y="21.0" width="4" height="1.5" fill="#569CD6" opacity="0.62"/><rect x="11" y="21.0" width="1" height="1.5" fill="#808080" opacity="0.62"/><rect x="10" y="23.0" width="1" height="1.5" fill="#808080" opacity="0.62"/><rect x="11" y="23.0" width="5" height="1.5" fill="#569CD6" opacity="0.62"/><rect x="16" y="23.0" width="1" height="1.5" fill="#808080" opacity="0.62"/><rect x="17" y="23.0" width="7" height="1.5" fill="#CCCCCC" opacity="0.62"/><rect x="25" y="23.0" width="11" height="1.5" fill="#CCCCCC" opacity="0.62"/><rect x="37" y="23.0" width="6" height="1.5" fill="#CCCCCC" opacity="0.62"/><rect x="43" y="23.0" width="2" height="1.5" fill="#808080" opacity="0.62"/><rect x="45" y="23.0" width="5" height="1.5" fill="#569CD6" opacity="0.62"/><rect x="50" y="23.0" width="1" height="1.5" fill="#808080" opacity="0.62"/><rect x="10" y="25.0" width="1" height="1.5" fill="#808080" opacity="0.62"/><rect x="11" y="25.0" width="4" height="1.5" fill="#569CD6" opacity="0.62"/><rect x="16" y="25.0" width="3" height="1.5" fill="#9CDCFE" opacity="0.62"/><rect x="20" y="25.0" width="1" height="1.5" fill="#CCCCCC" opacity="0.62"/><rect x="21" y="25.0" width="12" height="1.5" fill="#CE9178" opacity="0.62"/><rect x="34" y="25.0" width="4" height="1.5" fill="#9CDCFE" opacity="0.62"/><rect x="38" y="25.0" width="1" height="1.5" fill="#CCCCCC" opacity="0.62"/><rect x="39" y="25.0" width="10" height="1.5" fill="#CE9178" opacity="0.62"/><rect x="50" y="25.0" width="4" height="1.5" fill="#9CDCFE" opacity="0.62"/><rect x="54" y="25.0" width="1" height="1.5" fill="#CCCCCC" opacity="0.62"/><rect x="55" y="25.0" width="7" height="1.5" fill="#CE9178" opacity="0.62"/><rect x="62" y="26.1" width="1" height="0.9" fill="#CE9178" opacity="0.45"/><rect x="63" y="25.0" width="4" height="1.5" fill="#CE9178" opacity="0.62"/><rect x="67" y="25.0" width="1" height="1.5" fill="#808080" opacity="0.62"/><rect x="6" y="27.0" width="2" height="1.5" fill="#808080" opacity="0.62"/><rect x="8" y="27.0" width="4" height="1.5" fill="#569CD6" opacity="0.62"/><rect x="12" y="27.0" width="1" height="1.5" fill="#808080" opacity="0.62"/><rect x="6" y="31.0" width="1" height="1.5" fill="#808080" opacity="0.62"/><rect x="7" y="31.0" width="4" height="1.5" fill="#569CD6" opacity="0.62"/><rect x="11" y="31.0" width="1" height="1.5" fill="#808080" opacity="0.62"/><rect x="10" y="33.0" width="5" height="1.5" fill="#569CD6" opacity="0.62"/><rect x="14" y="35.0" width="5" height="1.5" fill="#DCDCAA" opacity="0.62"/><rect x="20" y="35.0" width="1" height="1.5" fill="#FFD700" opacity="0.62"/><rect x="21" y="35.0" width="12" height="1.5" fill="#CE9178" opacity="0.62"/><rect x="34" y="35.0" width="11" height="1.5" fill="#CE9178" opacity="0.62"/><rect x="46" y="35.0" width="12" height="1.5" fill="#CE9178" opacity="0.62"/><rect x="58" y="35.0" width="1" height="1.5" fill="#FFD700" opacity="0.62"/><rect x="59" y="36.1" width="1" height="0.9" fill="#CCCCCC" opacity="0.45"/><rect x="14" y="39.0" width="8" height="1.5" fill="#9CDCFE" opacity="0.62"/><rect x="23" y="39.0" width="1" height="1.5" fill="#CCCCCC" opacity="0.62"/><rect x="25" y="39.0" width="5" height="1.5" fill="#DCDCAA" opacity="0.62"/><rect x="31" y="39.0" width="1" height="1.5" fill="#FFD700" opacity="0.62"/><rect x="18" y="41.0" width="4" height="1.5" fill="#CE9178" opacity="0.62"/><rect x="22" y="42.1" width="1" height="0.9" fill="#CCCCCC" opacity="0.45"/><rect x="24" y="41.0" width="4" height="1.5" fill="#CE9178" opacity="0.62"/><rect x="28" y="42.1" width="1" height="0.9" fill="#CCCCCC" opacity="0.45"/><rect x="30" y="41.0" width="4" height="1.5" fill="#CE9178" opacity="0.62"/><rect x="34" y="42.1" width="1" height="0.9" fill="#CCCCCC" opacity="0.45"/><rect x="36" y="41.0" width="4" height="1.5" fill="#CE9178" opacity="0.62"/><rect x="40" y="42.1" width="1" height="0.9" fill="#CCCCCC" opacity="0.45"/><rect x="42" y="41.0" width="8" height="1.5" fill="#CE9178" opacity="0.62"/><rect x="50" y="42.1" width="1" height="0.9" fill="#CCCCCC" opacity="0.45"/><rect x="52" y="41.0" width="4" height="1.5" fill="#CE9178" opacity="0.62"/><rect x="56" y="42.1" width="1" height="0.9" fill="#CCCCCC" opacity="0.45"/><rect x="58" y="41.0" width="4" height="1.5" fill="#CE9178" opacity="0.62"/><rect x="62" y="42.1" width="1" height="0.9" fill="#CCCCCC" opacity="0.45"/><rect x="64" y="41.0" width="4" height="1.5" fill="#CE9178" opacity="0.62"/><rect x="68" y="42.1" width="1" height="0.9" fill="#CCCCCC" opacity="0.45"/><rect x="70" y="41.0" width="4" height="1.5" fill="#CE9178" opacity="0.62"/><rect x="74" y="42.1" width="1" height="0.9" fill="#CCCCCC" opacity="0.45"/><rect x="76" y="41.0" width="4" height="1.5" fill="#CE9178" opacity="0.62"/><rect x="80" y="42.1" width="1" height="0.9" fill="#CCCCCC" opacity="0.45"/><rect x="18" y="43.0" width="4" height="1.5" fill="#CE9178" opacity="0.62"/><rect x="22" y="44.1" width="1" height="0.9" fill="#CCCCCC" opacity="0.45"/><rect x="24" y="43.0" width="4" height="1.5" fill="#CE9178" opacity="0.62"/><rect x="28" y="44.1" width="1" height="0.9" fill="#CCCCCC" opacity="0.45"/><rect x="30" y="43.0" width="4" height="1.5" fill="#CE9178" opacity="0.62"/><rect x="34" y="44.1" width="1" height="0.9" fill="#CCCCCC" opacity="0.45"/><rect x="36" y="43.0" width="8" height="1.5" fill="#CE9178" opacity="0.62"/><rect x="44" y="44.1" width="1" height="0.9" fill="#CCCCCC" opacity="0.45"/><rect x="46" y="43.0" width="4" height="1.5" fill="#CE9178" opacity="0.62"/><rect x="50" y="44.1" width="1" height="0.9" fill="#CCCCCC" opacity="0.45"/><rect x="52" y="43.0" width="8" height="1.5" fill="#CE9178" opacity="0.62"/><rect x="60" y="44.1" width="1" height="0.9" fill="#CCCCCC" opacity="0.45"/><rect x="62" y="43.0" width="4" height="1.5" fill="#CE9178" opacity="0.62"/><rect x="66" y="44.1" width="1" height="0.9" fill="#CCCCCC" opacity="0.45"/><rect x="68" y="43.0" width="4" height="1.5" fill="#CE9178" opacity="0.62"/><rect x="72" y="44.1" width="1" height="0.9" fill="#CCCCCC" opacity="0.45"/><rect x="74" y="43.0" width="4" height="1.5" fill="#CE9178" opacity="0.62"/><rect x="78" y="44.1" width="1" height="0.9" fill="#CCCCCC" opacity="0.45"/><rect x="80" y="43.0" width="4" height="1.5" fill="#CE9178" opacity="0.62"/><rect x="84" y="44.1" width="1" height="0.9" fill="#CCCCCC" opacity="0.45"/><rect x="18" y="45.0" width="4" height="1.5" fill="#CE9178" opacity="0.62"/><rect x="22" y="46.1" width="1" height="0.9" fill="#CCCCCC" opacity="0.45"/><rect x="24" y="45.0" width="4" height="1.5" fill="#CE9178" opacity="0.62"/><rect x="28" y="46.1" width="1" height="0.9" fill="#CCCCCC" opacity="0.45"/><rect x="30" y="45.0" width="4" height="1.5" fill="#CE9178" opacity="0.62"/><rect x="34" y="46.1" width="1" height="0.9" fill="#CCCCCC" opacity="0.45"/><rect x="36" y="45.0" width="4" height="1.5" fill="#CE9178" opacity="0.62"/><rect x="40" y="46.1" width="1" height="0.9" fill="#CCCCCC" opacity="0.45"/><rect x="42" y="45.0" width="4" height="1.5" fill="#CE9178" opacity="0.62"/><rect x="46" y="46.1" width="1" height="0.9" fill="#CCCCCC" opacity="0.45"/><rect x="48" y="45.0" width="4" height="1.5" fill="#CE9178" opacity="0.62"/><rect x="52" y="46.1" width="1" height="0.9" fill="#CCCCCC" opacity="0.45"/><rect x="54" y="45.0" width="4" height="1.5" fill="#CE9178" opacity="0.62"/><rect x="58" y="46.1" width="1" height="0.9" fill="#CCCCCC" opacity="0.45"/><rect x="60" y="45.0" width="4" height="1.5" fill="#CE9178" opacity="0.62"/><rect x="64" y="46.1" width="1" height="0.9" fill="#CCCCCC" opacity="0.45"/><rect x="66" y="45.0" width="4" height="1.5" fill="#CE9178" opacity="0.62"/><rect x="70" y="46.1" width="1" height="0.9" fill="#CCCCCC" opacity="0.45"/><rect x="72" y="45.0" width="4" height="1.5" fill="#CE9178" opacity="0.62"/><rect x="76" y="46.1" width="1" height="0.9" fill="#CCCCCC" opacity="0.45"/><rect x="18" y="47.0" width="4" height="1.5" fill="#CE9178" opacity="0.62"/><rect x="22" y="48.1" width="1" height="0.9" fill="#CCCCCC" opacity="0.45"/><rect x="24" y="47.0" width="4" height="1.5" fill="#CE9178" opacity="0.62"/><rect x="28" y="48.1" width="1" height="0.9" fill="#CCCCCC" opacity="0.45"/><rect x="30" y="47.0" width="8" height="1.5" fill="#CE9178" opacity="0.62"/><rect x="38" y="48.1" width="1" height="0.9" fill="#CCCCCC" opacity="0.45"/><rect x="40" y="47.0" width="8" height="1.5" fill="#CE9178" opacity="0.62"/><rect x="48" y="48.1" width="1" height="0.9" fill="#CCCCCC" opacity="0.45"/><rect x="50" y="47.0" width="8" height="1.5" fill="#CE9178" opacity="0.62"/><rect x="58" y="48.1" width="1" height="0.9" fill="#CCCCCC" opacity="0.45"/><rect x="60" y="47.0" width="4" height="1.5" fill="#CE9178" opacity="0.62"/><rect x="64" y="48.1" width="1" height="0.9" fill="#CCCCCC" opacity="0.45"/><rect x="66" y="47.0" width="4" height="1.5" fill="#CE9178" opacity="0.62"/><rect x="70" y="48.1" width="1" height="0.9" fill="#CCCCCC" opacity="0.45"/><rect x="72" y="47.0" width="4" height="1.5" fill="#CE9178" opacity="0.62"/><rect x="76" y="48.1" width="1" height="0.9" fill="#CCCCCC" opacity="0.45"/><rect x="78" y="47.0" width="4" height="1.5" fill="#CE9178" opacity="0.62"/><rect x="82" y="48.1" width="1" height="0.9" fill="#CCCCCC" opacity="0.45"/><rect x="84" y="47.0" width="4" height="1.5" fill="#CE9178" opacity="0.62"/><rect x="88" y="48.1" width="1" height="0.9" fill="#CCCCCC" opacity="0.45"/><rect x="18" y="49.0" width="4" height="1.5" fill="#CE9178" opacity="0.62"/><rect x="22" y="50.1" width="1" height="0.9" fill="#CCCCCC" opacity="0.45"/><rect x="24" y="49.0" width="4" height="1.5" fill="#CE9178" opacity="0.62"/><rect x="28" y="50.1" width="1" height="0.9" fill="#CCCCCC" opacity="0.45"/><rect x="30" y="49.0" width="4" height="1.5" fill="#CE9178" opacity="0.62"/><rect x="34" y="50.1" width="1" height="0.9" fill="#CCCCCC" opacity="0.45"/><rect x="36" y="49.0" width="4" height="1.5" fill="#CE9178" opacity="0.62"/><rect x="40" y="50.1" width="1" height="0.9" fill="#CCCCCC" opacity="0.45"/><rect x="42" y="49.0" width="4" height="1.5" fill="#CE9178" opacity="0.62"/><rect x="46" y="50.1" width="1" height="0.9" fill="#CCCCCC" opacity="0.45"/><rect x="48" y="49.0" width="4" height="1.5" fill="#CE9178" opacity="0.62"/><rect x="52" y="50.1" width="1" height="0.9" fill="#CCCCCC" opacity="0.45"/><rect x="54" y="49.0" width="4" height="1.5" fill="#CE9178" opacity="0.62"/><rect x="58" y="50.1" width="1" height="0.9" fill="#CCCCCC" opacity="0.45"/><rect x="60" y="49.0" width="4" height="1.5" fill="#CE9178" opacity="0.62"/><rect x="64" y="50.1" width="1" height="0.9" fill="#CCCCCC" opacity="0.45"/><rect x="66" y="49.0" width="4" height="1.5" fill="#CE9178" opacity="0.62"/><rect x="70" y="50.1" width="1" height="0.9" fill="#CCCCCC" opacity="0.45"/><rect x="72" y="49.0" width="4" height="1.5" fill="#CE9178" opacity="0.62"/><rect x="76" y="50.1" width="1" height="0.9" fill="#CCCCCC" opacity="0.45"/><rect x="18" y="51.0" width="4" height="1.5" fill="#CE9178" opacity="0.62"/><rect x="22" y="52.1" width="1" height="0.9" fill="#CCCCCC" opacity="0.45"/><rect x="24" y="51.0" width="4" height="1.5" fill="#CE9178" opacity="0.62"/><rect x="28" y="52.1" width="1" height="0.9" fill="#CCCCCC" opacity="0.45"/><rect x="30" y="51.0" width="4" height="1.5" fill="#CE9178" opacity="0.62"/><rect x="34" y="52.1" width="1" height="0.9" fill="#CCCCCC" opacity="0.45"/><rect x="36" y="51.0" width="8" height="1.5" fill="#CE9178" opacity="0.62"/><rect x="44" y="52.1" width="1" height="0.9" fill="#CCCCCC" opacity="0.45"/><rect x="46" y="51.0" width="4" height="1.5" fill="#CE9178" opacity="0.62"/><rect x="50" y="52.1" width="1" height="0.9" fill="#CCCCCC" opacity="0.45"/><rect x="52" y="51.0" width="4" height="1.5" fill="#CE9178" opacity="0.62"/><rect x="56" y="52.1" width="1" height="0.9" fill="#CCCCCC" opacity="0.45"/><rect x="58" y="51.0" width="4" height="1.5" fill="#CE9178" opacity="0.62"/><rect x="62" y="52.1" width="1" height="0.9" fill="#CCCCCC" opacity="0.45"/><rect x="64" y="51.0" width="4" height="1.5" fill="#CE9178" opacity="0.62"/><rect x="68" y="52.1" width="1" height="0.9" fill="#CCCCCC" opacity="0.45"/><rect x="70" y="51.0" width="4" height="1.5" fill="#CE9178" opacity="0.62"/><rect x="74" y="52.1" width="1" height="0.9" fill="#CCCCCC" opacity="0.45"/><rect x="76" y="51.0" width="4" height="1.5" fill="#CE9178" opacity="0.62"/><rect x="80" y="52.1" width="1" height="0.9" fill="#CCCCCC" opacity="0.45"/><rect x="18" y="53.0" width="4" height="1.5" fill="#CE9178" opacity="0.62"/><rect x="22" y="54.1" width="1" height="0.9" fill="#CCCCCC" opacity="0.45"/><rect x="24" y="53.0" width="4" height="1.5" fill="#CE9178" opacity="0.62"/><rect x="28" y="54.1" width="1" height="0.9" fill="#CCCCCC" opacity="0.45"/><rect x="30" y="53.0" width="4" height="1.5" fill="#CE9178" opacity="0.62"/><rect x="34" y="54.1" width="1" height="0.9" fill="#CCCCCC" opacity="0.45"/><rect x="36" y="53.0" width="4" height="1.5" fill="#CE9178" opacity="0.62"/><rect x="40" y="54.1" width="1" height="0.9" fill="#CCCCCC" opacity="0.45"/><rect x="42" y="53.0" width="4" height="1.5" fill="#CE9178" opacity="0.62"/><rect x="46" y="54.1" width="1" height="0.9" fill="#CCCCCC" opacity="0.45"/><rect x="48" y="53.0" width="4" height="1.5" fill="#CE9178" opacity="0.62"/><rect x="52" y="54.1" width="1" height="0.9" fill="#CCCCCC" opacity="0.45"/><rect x="54" y="53.0" width="4" height="1.5" fill="#CE9178" opacity="0.62"/><rect x="58" y="54.1" width="1" height="0.9" fill="#CCCCCC" opacity="0.45"/><rect x="60" y="53.0" width="4" height="1.5" fill="#CE9178" opacity="0.62"/><rect x="64" y="54.1" width="1" height="0.9" fill="#CCCCCC" opacity="0.45"/><rect x="66" y="53.0" width="4" height="1.5" fill="#CE9178" opacity="0.62"/><rect x="70" y="54.1" width="1" height="0.9" fill="#CCCCCC" opacity="0.45"/><rect x="72" y="53.0" width="4" height="1.5" fill="#CE9178" opacity="0.62"/><rect x="76" y="54.1" width="1" height="0.9" fill="#CCCCCC" opacity="0.45"/><rect x="18" y="55.0" width="4" height="1.5" fill="#CE9178" opacity="0.62"/><rect x="22" y="56.1" width="1" height="0.9" fill="#CCCCCC" opacity="0.45"/><rect x="24" y="55.0" width="4" height="1.5" fill="#CE9178" opacity="0.62"/><rect x="28" y="56.1" width="1" height="0.9" fill="#CCCCCC" opacity="0.45"/><rect x="30" y="55.0" width="8" height="1.5" fill="#CE9178" opacity="0.62"/><rect x="38" y="56.1" width="1" height="0.9" fill="#CCCCCC" opacity="0.45"/><rect x="40" y="55.0" width="4" height="1.5" fill="#CE9178" opacity="0.62"/><rect x="44" y="56.1" width="1" height="0.9" fill="#CCCCCC" opacity="0.45"/><rect x="46" y="55.0" width="4" height="1.5" fill="#CE9178" opacity="0.62"/><rect x="50" y="56.1" width="1" height="0.9" fill="#CCCCCC" opacity="0.45"/><rect x="52" y="55.0" width="4" height="1.5" fill="#CE9178" opacity="0.62"/><rect x="56" y="56.1" width="1" height="0.9" fill="#CCCCCC" opacity="0.45"/><rect x="58" y="55.0" width="4" height="1.5" fill="#CE9178" opacity="0.62"/><rect x="62" y="56.1" width="1" height="0.9" fill="#CCCCCC" opacity="0.45"/><rect x="64" y="55.0" width="4" height="1.5" fill="#CE9178" opacity="0.62"/><rect x="68" y="56.1" width="1" height="0.9" fill="#CCCCCC" opacity="0.45"/><rect x="70" y="55.0" width="4" height="1.5" fill="#CE9178" opacity="0.62"/><rect x="74" y="56.1" width="1" height="0.9" fill="#CCCCCC" opacity="0.45"/><rect x="76" y="55.0" width="4" height="1.5" fill="#CE9178" opacity="0.62"/><rect x="80" y="56.1" width="1" height="0.9" fill="#CCCCCC" opacity="0.45"/><rect x="18" y="57.0" width="4" height="1.5" fill="#CE9178" opacity="0.62"/><rect x="22" y="58.1" width="1" height="0.9" fill="#CCCCCC" opacity="0.45"/><rect x="24" y="57.0" width="4" height="1.5" fill="#CE9178" opacity="0.62"/><rect x="28" y="58.1" width="1" height="0.9" fill="#CCCCCC" opacity="0.45"/><rect x="30" y="57.0" width="4" height="1.5" fill="#CE9178" opacity="0.62"/><rect x="34" y="58.1" width="1" height="0.9" fill="#CCCCCC" opacity="0.45"/><rect x="36" y="57.0" width="4" height="1.5" fill="#CE9178" opacity="0.62"/><rect x="40" y="58.1" width="1" height="0.9" fill="#CCCCCC" opacity="0.45"/><rect x="42" y="57.0" width="4" height="1.5" fill="#CE9178" opacity="0.62"/><rect x="46" y="58.1" width="1" height="0.9" fill="#CCCCCC" opacity="0.45"/><rect x="48" y="57.0" width="4" height="1.5" fill="#CE9178" opacity="0.62"/><rect x="52" y="58.1" width="1" height="0.9" fill="#CCCCCC" opacity="0.45"/><rect x="54" y="57.0" width="8" height="1.5" fill="#CE9178" opacity="0.62"/><rect x="62" y="58.1" width="1" height="0.9" fill="#CCCCCC" opacity="0.45"/><rect x="64" y="57.0" width="4" height="1.5" fill="#CE9178" opacity="0.62"/><rect x="68" y="58.1" width="1" height="0.9" fill="#CCCCCC" opacity="0.45"/><rect x="70" y="57.0" width="4" height="1.5" fill="#CE9178" opacity="0.62"/><rect x="74" y="58.1" width="1" height="0.9" fill="#CCCCCC" opacity="0.45"/><rect x="76" y="57.0" width="4" height="1.5" fill="#CE9178" opacity="0.62"/><rect x="80" y="58.1" width="1" height="0.9" fill="#CCCCCC" opacity="0.45"/><rect x="18" y="59.0" width="4" height="1.5" fill="#CE9178" opacity="0.62"/><rect x="22" y="60.1" width="1" height="0.9" fill="#CCCCCC" opacity="0.45"/><rect x="24" y="59.0" width="4" height="1.5" fill="#CE9178" opacity="0.62"/><rect x="28" y="60.1" width="1" height="0.9" fill="#CCCCCC" opacity="0.45"/><rect x="30" y="59.0" width="4" height="1.5" fill="#CE9178" opacity="0.62"/><rect x="34" y="60.1" width="1" height="0.9" fill="#CCCCCC" opacity="0.45"/><rect x="36" y="59.0" width="4" height="1.5" fill="#CE9178" opacity="0.62"/><rect x="40" y="60.1" width="1" height="0.9" fill="#CCCCCC" opacity="0.45"/><rect x="42" y="59.0" width="4" height="1.5" fill="#CE9178" opacity="0.62"/><rect x="46" y="60.1" width="1" height="0.9" fill="#CCCCCC" opacity="0.45"/><rect x="48" y="59.0" width="4" height="1.5" fill="#CE9178" opacity="0.62"/><rect x="52" y="60.1" width="1" height="0.9" fill="#CCCCCC" opacity="0.45"/><rect x="54" y="59.0" width="4" height="1.5" fill="#CE9178" opacity="0.62"/><rect x="58" y="60.1" width="1" height="0.9" fill="#CCCCCC" opacity="0.45"/><rect x="60" y="59.0" width="8" height="1.5" fill="#CE9178" opacity="0.62"/><rect x="68" y="60.1" width="1" height="0.9" fill="#CCCCCC" opacity="0.45"/><rect x="70" y="59.0" width="4" height="1.5" fill="#CE9178" opacity="0.62"/><rect x="74" y="60.1" width="1" height="0.9" fill="#CCCCCC" opacity="0.45"/><rect x="76" y="59.0" width="4" height="1.5" fill="#CE9178" opacity="0.62"/><rect x="80" y="59.0" width="1" height="1.5" fill="#FFD700" opacity="0.62"/><rect x="81" y="60.1" width="1" height="0.9" fill="#CCCCCC" opacity="0.45"/><rect x="14" y="63.0" width="6" height="1.5" fill="#9CDCFE" opacity="0.62"/><rect x="21" y="63.0" width="1" height="1.5" fill="#CCCCCC" opacity="0.62"/><rect x="23" y="63.0" width="1" height="1.5" fill="#B5CEA8" opacity="0.62"/><rect x="24" y="64.1" width="1" height="0.9" fill="#CCCCCC" opacity="0.45"/><rect x="14" y="67.0" width="2" height="1.5" fill="#6A9955" opacity="0.62"/><rect x="17" y="67.0" width="3" height="1.5" fill="#6A9955" opacity="0.62"/><rect x="21" y="67.0" width="4" height="1.5" fill="#6A9955" opacity="0.62"/><rect x="26" y="67.0" width="3" height="1.5" fill="#6A9955" opacity="0.62"/><rect x="30" y="67.0" width="4" height="1.5" fill="#6A9955" opacity="0.62"/><rect x="35" y="67.0" width="4" height="1.5" fill="#6A9955" opacity="0.62"/><rect x="40" y="67.0" width="2" height="1.5" fill="#6A9955" opacity="0.62"/><rect x="43" y="67.0" width="7" height="1.5" fill="#6A9955" opacity="0.62"/><rect x="51" y="67.0" width="3" height="1.5" fill="#6A9955" opacity="0.62"/><rect x="55" y="67.0" width="5" height="1.5" fill="#6A9955" opacity="0.62"/><rect x="61" y="67.0" width="3" height="1.5" fill="#6A9955" opacity="0.62"/><rect x="65" y="67.0" width="5" height="1.5" fill="#6A9955" opacity="0.62"/><rect x="71" y="67.0" width="3" height="1.5" fill="#6A9955" opacity="0.62"/><rect x="75" y="67.0" width="7" height="1.5" fill="#6A9955" opacity="0.62"/><rect x="83" y="67.0" width="2" height="1.5" fill="#6A9955" opacity="0.62"/><rect x="86" y="67.0" width="3" height="1.5" fill="#6A9955" opacity="0.62"/><rect x="90" y="67.0" width="5" height="1.5" fill="#6A9955" opacity="0.62"/><rect x="96" y="67.0" width="4" height="1.5" fill="#6A9955" opacity="0.62"/><rect x="101" y="67.0" width="4" height="1.5" fill="#6A9955" opacity="0.62"/><rect x="106" y="67.0" width="6" height="1.5" fill="#6A9955" opacity="0.62"/><rect x="112" y="68.1" width="1" height="0.9" fill="#6A9955" opacity="0.45"/><rect x="14" y="69.0" width="2" height="1.5" fill="#6A9955" opacity="0.62"/><rect x="17" y="69.0" width="3" height="1.5" fill="#6A9955" opacity="0.62"/><rect x="21" y="69.0" width="7" height="1.5" fill="#6A9955" opacity="0.62"/><rect x="28" y="70.1" width="1" height="0.9" fill="#6A9955" opacity="0.45"/><rect x="14" y="71.0" width="2" height="1.5" fill="#6A9955" opacity="0.62"/><rect x="18" y="71.0" width="4" height="1.5" fill="#6A9955" opacity="0.62"/><rect x="23" y="71.0" width="2" height="1.5" fill="#6A9955" opacity="0.62"/><rect x="26" y="71.0" width="5" height="1.5" fill="#6A9955" opacity="0.62"/><rect x="32" y="71.0" width="6" height="1.5" fill="#6A9955" opacity="0.62"/><rect x="14" y="73.0" width="2" height="1.5" fill="#6A9955" opacity="0.62"/><rect x="18" y="73.0" width="4" height="1.5" fill="#6A9955" opacity="0.62"/><rect x="23" y="73.0" width="3" height="1.5" fill="#6A9955" opacity="0.62"/><rect x="27" y="73.0" width="5" height="1.5" fill="#6A9955" opacity="0.62"/><rect x="33" y="73.0" width="6" height="1.5" fill="#6A9955" opacity="0.62"/><rect x="40" y="73.0" width="3" height="1.5" fill="#6A9955" opacity="0.62"/><rect x="44" y="73.0" width="2" height="1.5" fill="#6A9955" opacity="0.62"/><rect x="47" y="73.0" width="2" height="1.5" fill="#6A9955" opacity="0.62"/><rect x="49" y="74.1" width="1" height="0.9" fill="#6A9955" opacity="0.45"/><rect x="50" y="74.1" width="1" height="0.9" fill="#6A9955" opacity="0.45"/><rect x="14" y="75.0" width="2" height="1.5" fill="#6A9955" opacity="0.62"/><rect x="17" y="75.0" width="3" height="1.5" fill="#6A9955" opacity="0.62"/><rect x="21" y="75.0" width="4" height="1.5" fill="#6A9955" opacity="0.62"/><rect x="26" y="75.0" width="4" height="1.5" fill="#6A9955" opacity="0.62"/><rect x="31" y="75.0" width="4" height="1.5" fill="#6A9955" opacity="0.62"/><rect x="36" y="75.0" width="5" height="1.5" fill="#6A9955" opacity="0.62"/><rect x="42" y="75.0" width="3" height="1.5" fill="#6A9955" opacity="0.62"/><rect x="46" y="75.0" width="6" height="1.5" fill="#6A9955" opacity="0.62"/><rect x="53" y="75.0" width="2" height="1.5" fill="#6A9955" opacity="0.62"/><rect x="56" y="75.0" width="5" height="1.5" fill="#6A9955" opacity="0.62"/><rect x="62" y="75.0" width="2" height="1.5" fill="#6A9955" opacity="0.62"/><rect x="65" y="75.0" width="4" height="1.5" fill="#6A9955" opacity="0.62"/><rect x="70" y="75.0" width="2" height="1.5" fill="#6A9955" opacity="0.62"/><rect x="73" y="75.0" width="6" height="1.5" fill="#6A9955" opacity="0.62"/><rect x="14" y="85.0" width="5" height="1.5" fill="#DCDCAA" opacity="0.62"/><rect x="20" y="85.0" width="1" height="1.5" fill="#FFD700" opacity="0.62"/><rect x="21" y="85.0" width="4" height="1.5" fill="#CE9178" opacity="0.62"/><rect x="25" y="85.0" width="6" height="1.5" fill="#9CDCFE" opacity="0.62"/><rect x="32" y="85.0" width="5" height="1.5" fill="#CE9178" opacity="0.62"/><rect x="38" y="85.0" width="3" height="1.5" fill="#CE9178" opacity="0.62"/><rect x="42" y="85.0" width="2" height="1.5" fill="#CE9178" opacity="0.62"/><rect x="45" y="85.0" width="4" height="1.5" fill="#CE9178" opacity="0.62"/><rect x="50" y="85.0" width="2" height="1.5" fill="#CE9178" opacity="0.62"/><rect x="53" y="85.0" width="11" height="1.5" fill="#CE9178" opacity="0.62"/><rect x="64" y="85.0" width="1" height="1.5" fill="#FFD700" opacity="0.62"/><rect x="65" y="86.1" width="1" height="0.9" fill="#CCCCCC" opacity="0.45"/><rect x="6" y="87.0" width="2" height="1.5" fill="#569CD6" opacity="0.62"/><rect x="6" y="89.0" width="2" height="1.5" fill="#808080" opacity="0.62"/><rect x="8" y="89.0" width="4" height="1.5" fill="#569CD6" opacity="0.62"/><rect x="12" y="89.0" width="1" height="1.5" fill="#808080" opacity="0.62"/><rect x="6" y="91.0" width="2" height="1.5" fill="#808080" opacity="0.62"/><rect x="8" y="91.0" width="4" height="1.5" fill="#569CD6" opacity="0.62"/><rect x="12" y="91.0" width="1" height="1.5" fill="#808080" opacity="0.62"/></svg>
<div style="left:1903px;top:115px;width:1px;height:878px;background:#0a0a0a;"></div>
<div style="left:1904px;top:116px;width:16px;height:2px;background:#a0a0a0;"></div>
<div style="left:1904px;top:174px;width:16px;height:401px;background:#4f4f4f;"></div>
<div style="left:0px;top:993px;width:1920px;height:27px;background:#181818;"></div>
<div style="left:0px;top:993px;width:1920px;height:1px;background:#2b2b2b;"></div>
<div style="left:0px;top:994px;width:43px;height:26px;background:#0078d4;"></div>
<svg style="position:absolute;left:13px;top:996px;" width="18" height="20" viewBox="0 0 18 20"><path d="M3.1 6.6 L8.4 11.8 L3.1 17 M14.2 2.6 L9 7.6 L14.2 12.4" stroke="#ffffff" stroke-width="1.3" fill="none"/></svg>
<svg style="position:absolute;left:52px;top:997px;" width="18" height="18" viewBox="0 0 18 18"><circle cx="9.2" cy="9" r="7.6" stroke="#cccccc" stroke-width="1.45" fill="none"/><path d="M6.2 6 L12.2 12 M12.2 6 L6.2 12" stroke="#cccccc" stroke-width="1.45" fill="none"/></svg>
<div class="ls" style="left:73.81px;top:999.23px;font-size:14.2px;color:#cccccc;transform:scaleX(0.9224);">0</div>
<svg style="position:absolute;left:86px;top:996px;" width="19" height="19" viewBox="0 0 19 19"><path d="M9.5 2.6 L17 16.4 H2 Z" stroke="#cccccc" stroke-width="1.45" fill="none"/><path d="M9.5 7 V12.2 M9.5 13.6 V15" stroke="#cccccc" stroke-width="1.45" fill="none"/></svg>
<div class="ls" style="left:108.27px;top:999.23px;font-size:14.2px;color:#cccccc;transform:scaleX(0.9252);">0</div>
<svg style="position:absolute;left:137px;top:996px;" width="18" height="19" viewBox="0 0 18 19"><path d="M9 9.5 L5.3 17.6 M9 9.5 L12.7 17.6 M6.6 14.4 H11.4" stroke="#cccccc" stroke-width="1.45" fill="none"/><circle cx="9" cy="7.6" r="1.6" stroke="#cccccc" stroke-width="1.45" fill="none"/><path d="M5.2 4 Q3.6 7.6 5.2 11.2 M12.8 4 Q14.4 7.6 12.8 11.2 M2.4 2 Q-0.2 7.6 2.4 13.2 M15.6 2 Q18.2 7.6 15.6 13.2" stroke="#cccccc" stroke-width="1.45" fill="none"/></svg>
<div class="ls" style="left:157.77px;top:999.23px;font-size:14.2px;color:#cccccc;transform:scaleX(0.8619);">0</div>
<div class="ls" style="left:1547.65px;top:999.53px;font-size:14.2px;color:#cccccc;transform:scaleX(0.9742);">Ln 1, Col 1</div>
<div class="ls" style="left:1636.06px;top:999.53px;font-size:14.2px;color:#cccccc;transform:scaleX(0.9504);">Tab Size: 4</div>
<div class="ls" style="left:1724.35px;top:998.73px;font-size:14.2px;color:#cccccc;transform:scaleX(0.9602);">UTF-8</div>
<div class="ls" style="left:1783.81px;top:998.73px;font-size:14.2px;color:#cccccc;transform:scaleX(0.8512);">CRLF</div>
<div class="ls" style="left:1836.35px;top:998.73px;font-size:14.2px;color:#cccccc;transform:scaleX(0.9233);">PHP</div>
<svg style="position:absolute;left:1884px;top:996px;" width="18" height="20" viewBox="0 0 18 20"><path d="M3.9 13.4 V8.2 Q3.9 2.7 9 2.7 Q14.1 2.7 14.1 8.2 V13.4 L15.4 15.2 H2.6 Z" stroke="#cccccc" stroke-width="1.45" fill="none"/><path d="M7.5 16.2 Q9 18.4 10.5 16.2" stroke="#cccccc" stroke-width="1.45" fill="none"/></svg>
<div style="left:0;top:1020px;width:1920px;height:60px;background:linear-gradient(90deg,#1f1c2f 0px,#261c34 250px,#2c1c35 600px,#30202c 820px,#33221f 1000px,#3a1e1c 1200px,#421816 1420px,#3d1814 1560px,#351a18 1720px,#2c1c1e 1920px)"></div>
<div style="left:0px;top:1020px;width:1920px;height:1px;background:#4a4044;"></div>
<svg style="position:absolute;left:24px;top:1033px;" width="36" height="26" viewBox="0 0 36 26"><defs><linearGradient id="cl" x1="0" y1="0" x2="0" y2="1"><stop offset="0" stop-color="#d4e4fa"/><stop offset="0.6" stop-color="#b0cdf4"/><stop offset="1" stop-color="#7ea6e6"/></linearGradient></defs>
<path d="M5.6 23.6 Q1.2 23.6 1.2 19.4 Q1.4 15.4 5.8 15 Q7.4 8 14.6 7.6 Q20.4 7.4 22.6 12.6 Q29.6 12.2 30.8 18.4 Q31.2 23.6 26.2 23.6 Z" fill="url(#cl)"/></svg>
<div style="left:38.8px;top:1027.8px;width:19.8px;height:19.8px;border-radius:50%;background:#f4909a"></div>
<svg style="position:absolute;left:38.8px;top:1027.8px;" width="20" height="20" viewBox="0 0 20 20"><path d="M7.6 7.6 L10.6 5.4 V15" stroke="#2a1a1a" stroke-width="1.3" fill="none"/></svg>
<div class="ls" style="left:64.70px;top:1032.23px;font-size:14.5px;color:#ffffff;transform:scaleX(0.9332);">57°F</div>
<div class="ls" style="left:64.70px;top:1053.80px;font-size:14.5px;color:#d8d0d8;transform:scaleX(1.0285);">Cloudy</div>
<svg style="position:absolute;left:612px;top:1035px;" width="31" height="31" viewBox="0 0 31 31"><defs><linearGradient id="wl" x1="0" y1="0" x2="1" y2="1"><stop offset="0" stop-color="#6fd0fb"/><stop offset="1" stop-color="#1692f0"/></linearGradient></defs>
<rect x="0.8" y="0.9" width="13.8" height="13.8" rx="1.2" fill="url(#wl)"/><rect x="16.2" y="0.9" width="13.8" height="13.8" rx="1.2" fill="url(#wl)"/><rect x="0.8" y="16.2" width="13.8" height="13.8" rx="1.2" fill="url(#wl)"/><rect x="16.2" y="16.2" width="13.8" height="13.8" rx="1.2" fill="url(#wl)"/></svg>
<div style="left:659.3px;top:1030.3px;width:274.5px;height:39.6px;border-radius:20px;background:rgba(255,255,255,0.115);border:1px solid rgba(255,255,255,0.2)"></div>
<svg style="position:absolute;left:671px;top:1039px;" width="26" height="24" viewBox="0 0 26 24"><circle cx="10.8" cy="9.6" r="6.6" stroke="#e8e0e8" stroke-width="2" fill="none"/><path d="M15.6 14.4 L21 19.8" stroke="#e8e0e8" stroke-width="2.2" stroke-linecap="round"/></svg>
<div class="ls" style="left:705.42px;top:1042.04px;font-size:18px;color:#e0d8e0;transform:scaleX(0.8934);">Search</div>
<svg style="position:absolute;left:866px;top:1034px;" width="64" height="34" viewBox="0 0 64 34"><defs><linearGradient id="gr" x1="0" y1="0" x2="0" y2="1"><stop offset="0" stop-color="#9ad040"/><stop offset="1" stop-color="#3a9a2a"/></linearGradient></defs>
<path d="M2 30 Q6 24 20 24.5 Q40 23 60 25 Q62 30 56 32 Q30 34.5 6 32.5 Z" fill="url(#gr)"/>
<path d="M12 27 Q10.5 20 13 15.5 Q12 12 13.4 9.6 L12.8 6.6 L15.6 8.8 Q18 8 20.4 8.8 L23.2 6.6 L22.8 9.8 Q24.2 12.4 22.6 15.4 Q25.6 20 24 27 Z" fill="#8e8aa8"/>
<path d="M12 25.6 Q6.6 25 7.6 19 Q8 17 9.4 16.2" stroke="#8e8aa8" stroke-width="1.6" fill="none"/>
<path d="M15.4 17 Q18.2 22 21 17 Q18.2 19 15.4 17Z" fill="#e8e8f0"/>
<path d="M34 24 Q33 16 37 13 L50 13.2 Q55 13 55.6 18 L55.2 27.6 H53 L52 20.4 H40 L39 27.6 H36.6 Z" fill="#dca868"/>
<path d="M54.4 15 Q58.6 10 57.8 3.2 Q60.8 8 57.6 16" fill="#dca868"/>
<path d="M29.6 5.6 Q31 1.4 36.2 1.8 Q41.6 2.4 41.8 7.6 Q41.8 13.4 36 13.6 Q30.4 13.6 29.6 8.4 Z" fill="#e8b676"/>
<path d="M29.4 4.4 Q27 7.6 28.6 11 Q30.6 9 31.2 5.6 Z M41.4 4.4 Q44 7.6 42.4 11 Q40.4 9 39.8 5.6 Z" fill="#c88c4a"/>
<circle cx="33.6" cy="7.4" r="0.9" fill="#3a2a1a"/><circle cx="37.8" cy="7.4" r="0.9" fill="#3a2a1a"/><path d="M34.4 10.6 Q35.6 13.4 36.8 10.6Z" fill="#e06070"/>
<circle cx="4.6" cy="28" r="2.3" fill="#f0c020"/><circle cx="59" cy="26" r="2.3" fill="#f0c020"/><circle cx="40.4" cy="30.4" r="2.1" fill="#ffffff"/></svg>
<svg style="position:absolute;left:946px;top:1033px;" width="36" height="34" viewBox="0 0 36 34"><rect x="12.5" y="1.8" width="20" height="20" rx="2.2" fill="#e6e6e6"/><rect x="2.5" y="9.2" width="19.5" height="20" rx="2.2" fill="#6a6a6a" opacity="0.92"/><rect x="12.5" y="9.2" width="9.5" height="12.6" fill="#b8b8b8"/></svg>
<svg style="position:absolute;left:1002px;top:1035px;" width="34" height="32" viewBox="0 0 34 32"><path d="M2 3.2 Q2 1.8 3.4 1.8 H12 L15 4.6 H30.6 Q32 4.6 32 6 V28.8 H2 Z" fill="#e6b422"/><rect x="2" y="7" width="30" height="21.8" fill="#f8d04a"/><rect x="10" y="20" width="14.4" height="8.8" rx="1.5" fill="#1976d2"/><rect x="12" y="22.5" width="10.4" height="1.8" fill="#7ec4ff"/></svg>
<div style="left:1015.4px;top:1070px;width:7.3px;height:3.6px;border-radius:2px;background:#9a9098"></div>
<svg style="position:absolute;left:1055px;top:1031px;" width="38" height="38" viewBox="0 0 38 38"><defs><linearGradient id="eg1" x1="0" y1="0" x2="1" y2="0.6"><stop offset="0" stop-color="#36c0f6"/><stop offset="0.55" stop-color="#2cc3c8"/><stop offset="1" stop-color="#6ee35a"/></linearGradient><linearGradient id="eg2" x1="0" y1="0" x2="0" y2="1"><stop offset="0" stop-color="#1f95e6"/><stop offset="1" stop-color="#0b7ad8"/></linearGradient></defs>
<circle cx="18.9" cy="18.8" r="15" fill="url(#eg1)"/>
<path d="M4 19 Q4.6 13.6 10.6 12.8 Q17 12 20.4 17 Q16.2 16.4 14.6 21 Q13.8 27.4 20.6 30.4 Q26.4 32.2 31.8 29.2 Q27.8 34 19.6 33.8 Q5.6 33.4 4 19 Z" fill="url(#eg2)"/>
<path d="M14.6 21 Q16.2 16.4 20.4 17 Q23.4 17.6 23 21.6 Q22.6 24.6 26.4 25.8 Q30 26.6 32 26 Q31.6 28 31.8 29.2 Q26.4 32.2 20.6 30.4 Q13.8 27.4 14.6 21 Z" fill="#13569f"/>
<path d="M16.2 20 Q19 26 26 25.4 Q30.4 25 34 23.6 L34 26.6 Q28.6 28.6 23.4 28 Q17.4 26.8 16.2 20 Z" fill="#3a1e22"/><circle cx="19.3" cy="18.8" r="3.3" fill="#3a1e22"/></svg>
<div style="left:1069.6px;top:1070px;width:8.3px;height:3.6px;border-radius:2px;background:#9a9098"></div>
<svg style="position:absolute;left:1112px;top:1033px;" width="32" height="34" viewBox="0 0 32 34"><path d="M9.5 8 V4.5 Q9.5 2.2 11.8 2.2 H20.2 Q22.5 2.2 22.5 4.5 V8" stroke="#2aa6e8" stroke-width="2" fill="none"/><rect x="1.8" y="7.2" width="28.6" height="24.6" rx="3" fill="#f4f4f4"/><rect x="10" y="13.5" width="5.4" height="5.4" fill="#f25022"/><rect x="16.6" y="13.5" width="5.4" height="5.4" fill="#7fba00"/><rect x="10" y="20.1" width="5.4" height="5.4" fill="#00a4ef"/><rect x="16.6" y="20.1" width="5.4" height="5.4" fill="#ffb900"/></svg>
<svg style="position:absolute;left:1168px;top:1034px;" width="32" height="32" viewBox="0 0 32 32"><circle cx="15.9" cy="15.9" r="13.6" stroke="#f0f0f0" stroke-width="1.6" fill="none"/><text x="15.9" y="19.2" text-anchor="middle" font-family="Liberation Sans" font-size="8.4" fill="#f0f0f0" letter-spacing="-0.3">DELL</text></svg>
<svg style="position:absolute;left:1220px;top:1030px;" width="40" height="40" viewBox="0 0 40 40"><path fill-rule="evenodd" d="M5.1 5.2 L18.5 10.4 L31.9 5.2 L31.9 28.7 L18.5 34.7 L5.1 28.7 Z M11.1 13.6 L18.5 17.0 L26.1 13.6 L26.1 24.8 L18.5 28.7 L11.1 24.8 Z" fill="#c62d2d"/></svg>
<div style="left:1269.2px;top:1025.2px;width:49.3px;height:49.4px;border-radius:5px;background:#4a343a;opacity:0.55"></div>
<svg style="position:absolute;left:1278.3px;top:1034.6px" width="31" height="30.2" viewBox="0 0 100 100" preserveAspectRatio="none"><defs><clipPath id="vcb"><path d="M96.46 10.8L75.86.87a6.23 6.23 0 0 0-7.1 1.2L29.35 38.04 12.19 25.01a4.16 4.16 0 0 0-5.32.24L1.36 30.26a4.17 4.17 0 0 0 0 6.16L16.25 50 1.36 63.58a4.17 4.17 0 0 0 0 6.16l5.51 5.01a4.16 4.16 0 0 0 5.32.24l17.16-13.03 39.41 35.96a6.23 6.23 0 0 0 7.1 1.2l20.6-9.92A6.25 6.25 0 0 0 100 83.6V16.4a6.25 6.25 0 0 0-3.54-5.6zM75.01 72.7L45.1 50l29.91-22.7v45.4z"/></clipPath></defs><path d="M96.46 10.8L75.86.87a6.23 6.23 0 0 0-7.1 1.2L29.35 38.04 12.19 25.01a4.16 4.16 0 0 0-5.32.24L1.36 30.26a4.17 4.17 0 0 0 0 6.16L16.25 50 1.36 63.58a4.17 4.17 0 0 0 0 6.16l5.51 5.01a4.16 4.16 0 0 0 5.32.24l17.16-13.03 39.41 35.96a6.23 6.23 0 0 0 7.1 1.2l20.6-9.92A6.25 6.25 0 0 0 100 83.6V16.4a6.25 6.25 0 0 0-3.54-5.6zM75.01 72.7L45.1 50l29.91-22.7v45.4z" fill="#0a7fd0"/><rect x="72" y="0" width="30" height="100" fill="#25a9f2" clip-path="url(#vcb)"/></svg>
<div style="left:1284px;top:1070px;width:20px;height:3.6px;border-radius:2px;background:#e0a6f2"></div>
<svg style="position:absolute;left:1566px;top:1042px;" width="20" height="14" viewBox="0 0 20 14"><path d="M3.2 10.8 L10 4 L16.8 10.8" stroke="#ffffff" stroke-width="2" fill="none" stroke-linecap="round" stroke-linejoin="round"/></svg>
<svg style="position:absolute;left:1600px;top:1034px;" width="32" height="32" viewBox="0 0 32 32"><path d="M6.6 15.6 A9.6 9.6 0 0 1 23.8 9.8" stroke="#ffffff" stroke-width="1.2" fill="none"/><path d="M24.8 6.2 V11.7 H19.3" stroke="#ffffff" stroke-width="1.2" fill="none"/><path d="M10 25.2 A9.6 9.6 0 0 0 16 25.6" stroke="#ffffff" stroke-width="1.2" fill="none"/><path d="M7.4 20.2 V25.6 H12.4" stroke="#ffffff" stroke-width="1.2" fill="none"/><circle cx="20.9" cy="20.9" r="5.1" fill="#f7a00c"/></svg>
<svg style="position:absolute;left:1644px;top:1040px;" width="24" height="20" viewBox="0 0 24 20"><path d="M2.2 8 Q12 -1.4 21.8 8" stroke="#ffffff" stroke-width="1.6" fill="none"/><path d="M5.4 11.4 Q12 5.2 18.6 11.4" stroke="#ffffff" stroke-width="1.6" fill="none"/><path d="M8.6 14.6 Q12 11.6 15.4 14.6" stroke="#ffffff" stroke-width="1.6" fill="none"/><circle cx="12" cy="16.6" r="1.6" fill="#ffffff"/></svg>
<svg style="position:absolute;left:1674px;top:1041px;" width="24" height="18" viewBox="0 0 24 18"><path d="M2 6 H6 L11.4 1.8 V16.2 L6 12 H2 Z" stroke="#ffffff" stroke-width="1.6" fill="none" stroke-width="1.3"/><path d="M14.5 6 L20.5 12 M20.5 6 L14.5 12" stroke="#ffffff" stroke-width="1.6" fill="none" stroke-width="1.3"/></svg>
<svg style="position:absolute;left:1700px;top:1034px;" width="32" height="30" viewBox="0 0 32 30"><path d="M9.6 10.8 H23.6 Q25.6 10.8 25.6 12.8 V22.4 Q25.6 24.4 23.6 24.4 H8.4 Q6.4 24.4 6.4 22.4 V17" stroke="#ffffff" stroke-width="1.3" fill="none"/><rect x="26" y="15" width="1.8" height="5" rx="0.6" fill="#ffffff"/><path d="M11 13 H19 V22.3 H8.6 V18.4 Z" fill="#ffffff"/><path d="M11.2 6 L7.2 13.6 H10.6 L8.6 18.8" stroke="#ffffff" stroke-width="1.3" fill="none" stroke-linejoin="round"/></svg>
<div class="ls" style="left:1760.33px;top:1032.20px;font-size:14.5px;color:#ffffff;transform:scaleX(1.0401);">9:18 AM</div>
<div class="ls" style="left:1746.74px;top:1052.96px;font-size:14.5px;color:#ffffff;transform:scaleX(1.0768);">4/11/2024</div>
<svg style="position:absolute;left:1826px;top:1040px;" width="19" height="21" viewBox="0 0 19 21"><path d="M2 16 Q3.6 14.6 3.6 12 V8.4 Q3.6 1.2 9.4 1.2 Q15.2 1.2 15.2 8.4 V12 Q15.2 14.6 16.8 16 Z" fill="#f0c2f2"/><path d="M6.6 17 Q9.4 21.4 12.2 17 Z" fill="#f0c2f2"/></svg>
<svg style="position:absolute;left:1864px;top:1035px;" width="34" height="32" viewBox="0 0 34 32"><defs><linearGradient id="cp1" x1="0" y1="0" x2="0" y2="1"><stop offset="0" stop-color="#2a9df4"/><stop offset="0.55" stop-color="#6ad06a"/><stop offset="1" stop-color="#f0d020"/></linearGradient><linearGradient id="cp2" x1="0" y1="0" x2="1" y2="1"><stop offset="0" stop-color="#b070f0"/><stop offset="1" stop-color="#f06090"/></linearGradient></defs>
<path d="M6 2.2 H17 Q20 2.2 21.4 5 L14 26 H5 Q2 26 2.6 22.6 L5 6 Q5.6 2.2 8 2.2 Z" fill="url(#cp1)"/><path d="M21 8.4 H27 Q30.6 8.4 30 12 L28 24 Q27.4 27.6 24 27.6 H14 Z" fill="url(#cp2)"/><path d="M17 2.2 H21 Q24 3 24.6 8 L21 8.4" fill="#1860e0"/>
<rect x="8" y="21.6" width="22" height="9.4" rx="2.6" fill="#f6c400"/><text x="19" y="29.4" text-anchor="middle" font-family="Liberation Sans" font-weight="bold" font-size="8.4" fill="#222" letter-spacing="0.6">PRE</text></svg>
</body></html>
